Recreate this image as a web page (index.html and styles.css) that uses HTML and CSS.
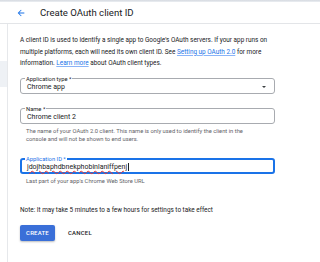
FILE: index.html
```html
<!DOCTYPE html>
<html>
<head>
<meta charset="utf-8">
<link rel="stylesheet" href="styles.css">
</head>
<body>
<div class="topstrip"></div>
<header class="header">
  <svg class="back" width="10" height="10" viewBox="0 0 24 24"><path d="M20 11H7.83l5.59-5.59L12 4l-8 8 8 8 1.41-1.41L7.83 13H20v-2z" fill="#1a73e8"/></svg>
  <h1 class="title">Create OAuth client ID</h1>
</header>
<div class="main">
  <aside class="sidebar"><div class="side-active"></div></aside>
  <section class="content">
    <p class="intro">A client ID is used to identify a single app to Google's OAuth servers. If your app runs on multiple platforms, each will need its own client ID. See <a class="link">Setting up OAuth 2.0</a> for more information. <a class="link">Learn more</a> about OAuth client types.</p>

    <fieldset class="field">
      <legend class="label">Application type *</legend>
      <div class="value select">Chrome app<span class="caret"></span></div>
    </fieldset>

    <fieldset class="field name">
      <legend class="label">Name *</legend>
      <div class="value">Chrome client 2</div>
    </fieldset>
    <p class="hint wide">The name of your OAuth 2.0 client. This name is only used to identify the client in the console and will not be shown to end users.</p>

    <fieldset class="field focused">
      <legend class="label">Application ID *</legend>
      <div class="value"><span class="spell">jdojhbaphdbnekphobinlaniffpenj</span><span class="cursor"></span></div>
    </fieldset>
    <p class="hint">Last part of your app's Chrome Web Store URL</p>

    <p class="note">Note: It may take 5 minutes to a few hours for settings to take effect</p>

    <div class="actions">
      <button class="btn primary">CREATE</button>
      <button class="btn text">CANCEL</button>
    </div>
  </section>
</div>
</body>
</html>
```
FILE: styles.css
```css
* { box-sizing: border-box; }
html, body { margin: 0; padding: 0; background: #fff; }
body {
  width: 320px;
  height: 262px;
  overflow: hidden;
  font-family: Roboto, "Liberation Sans", sans-serif;
  color: #202124;
}
.topstrip {
  height: 2px;
  background: linear-gradient(#d5d9e0, #eceff3);
}
.header {
  height: 22px;
  display: flex;
  align-items: center;
  border-bottom: 1px solid #e3e5e8;
  padding-left: 16px;
}
.back { display: block; }
.title {
  margin: 0 0 0 14px;
  font-size: 9.6px;
  font-weight: 400;
  color: #202124;
}
.main {
  display: flex;
  height: 238px;
}
.sidebar {
  width: 8px;
  border-right: 1px solid #e6e8eb;
  padding-top: 37px;
}
.side-active {
  height: 26px;
  background: #eef1f5;
}
.content {
  padding: 11px 0 0 12px;
  width: 268px;
}
.intro {
  margin: 0;
  font-size: 6.4px;
  line-height: 11.5px;
  color: #202124;
}
.link {
  color: #1a73e8;
  text-decoration: underline;
  text-decoration-color: #8ab4f8;
}
.field {
  margin: 6px 0 0 0;
  padding: 0 6px;
  border: 1px solid #a8abb0;
  border-radius: 3px;
  width: 255px;
  height: 18px;
  min-width: 0;
}
.field.name { margin-top: 12px; }
.field.focused {
  margin-top: 13px;
  border: 2px solid #1a73e8;
  padding: 0 5px;
}
.label {
  font-size: 5.8px;
  padding: 0 1px;
  margin-left: -2px;
  line-height: 6px;
  color: #202124;
}
.focused .label { color: #1a73e8; }
.value {
  font-size: 7px;
  line-height: 10px;
  display: flex;
  align-items: center;
}
.select { justify-content: space-between; }
.caret {
  width: 0;
  height: 0;
  border-left: 2.5px solid transparent;
  border-right: 2.5px solid transparent;
  border-top: 2.5px solid #3c4043;
  margin-right: 2px;
}
.spell {
  text-decoration: underline wavy #e53935;
  text-decoration-thickness: 0.5px;
  text-underline-offset: 1px;
}
.cursor {
  width: 0.6px;
  height: 8px;
  background: #202124;
  margin-left: 0.5px;
}
.hint {
  margin: 3px 0 0 6px;
  font-size: 5.8px;
  line-height: 8px;
  color: #5f6368;
}
.hint.wide { width: 232px; }
.note {
  margin: 21px 0 0 0;
  font-size: 6.4px;
  line-height: 9px;
}
.actions {
  display: flex;
  align-items: center;
  gap: 13px;
  margin-top: 10px;
}
.btn {
  font-family: Roboto, "Liberation Sans", sans-serif;
  font-size: 6px;
  font-weight: 500;
  letter-spacing: 0.2px;
  border: none;
  padding: 0;
  height: 16px;
}
.primary {
  width: 35px;
  background: #3a6fd8;
  color: #fff;
  border-radius: 2px;
  box-shadow: 0 1px 2px rgba(60,64,67,0.35);
}
.text {
  background: transparent;
  color: #202124;
}
```
